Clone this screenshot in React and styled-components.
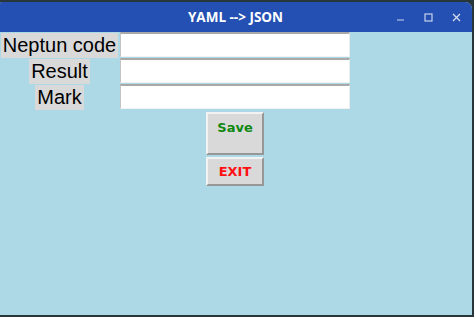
import React from "react";
import styled, { createGlobalStyle } from "styled-components";

const Global = createGlobalStyle`
  html, body { margin: 0; padding: 0; }
  body {
    background: #26363b;
    width: 474px;
    height: 317px;
    overflow: hidden;
  }
`;

const Window = styled.div`
  margin-top: 2px;
  width: 472px;
  height: 313px;
  display: flex;
  flex-direction: column;
  background: #add8e6;
  border-top-right-radius: 7px;
  border-top-left-radius: 2px;
  overflow: hidden;
`;

const TitleBar = styled.div`
  height: 30px;
  flex: 0 0 30px;
  background: #2350b2;
  display: grid;
  grid-template-columns: 1fr auto 1fr;
  align-items: center;
`;

const Title = styled.div`
  grid-column: 2;
  color: #ffffff;
  font-family: "Open Sans", "DejaVu Sans", sans-serif;
  font-weight: 700;
  font-size: 13.5px;
  padding-right: 1px;
`;

const Controls = styled.div`
  grid-column: 3;
  justify-self: end;
  display: flex;
  align-items: center;
  gap: 12px;
  padding-right: 8px;
`;

const Ctl = styled.span`
  width: 16px;
  height: 16px;
  display: flex;
  align-items: center;
  justify-content: center;
`;

const Content = styled.div`
  flex: 1;
  display: grid;
  grid-template-columns: 119px 230px;
  grid-template-rows: 26px 26px 26px auto auto;
  column-gap: 1px;
  align-content: start;
`;

const Label = styled.div`
  justify-self: center;
  align-self: center;
  background: #d9d9d9;
  color: #000;
  font-family: "Liberation Sans", Arial, sans-serif;
  font-size: 20px;
  line-height: 23px;
  padding: 1px 2px 1px 2px;
`;

const Entry = styled.input`
  box-sizing: border-box;
  width: 230px;
  height: 25px;
  margin: 0;
  padding: 0 3px;
  background: #ffffff;
  border-style: solid;
  border-width: 2px 1px 1px 1px;
  border-color: #a9a9a9 #ececec #f2f2f2 #c4c4c4;
  outline: none;
  font-family: "Liberation Sans", Arial, sans-serif;
  font-size: 13px;
  align-self: start;
`;

const Button = styled.button`
  grid-column: 2;
  justify-self: center;
  box-sizing: border-box;
  width: 58px;
  height: ${(p) => p.$h}px;
  margin-top: ${(p) => p.$mt}px;
  padding: 0 0 ${(p) => p.$pb || 0}px 0;
  background: #d9d9d9;
  border-style: solid;
  border-width: 2px;
  border-color: #f2f2f2 #979797 #979797 #f2f2f2;
  color: ${(p) => p.$color};
  font-family: "DejaVu Sans", Verdana, sans-serif;
  font-weight: 700;
  font-size: 13px;
  cursor: pointer;
`;

export default function App() {
  return (
    <>
      <Global />
      <Window>
        <TitleBar>
          <Title>YAML --&gt; JSON</Title>
          <Controls>
            <Ctl>
              <svg width="9" height="9" viewBox="0 0 9 9">
                <line x1="1" y1="7" x2="8" y2="7" stroke="#c9d3ee" strokeWidth="1.2" />
              </svg>
            </Ctl>
            <Ctl>
              <svg width="9" height="9" viewBox="0 0 9 9">
                <rect x="1" y="1" width="7" height="7" fill="none" stroke="#c9d3ee" strokeWidth="1.2" />
              </svg>
            </Ctl>
            <Ctl>
              <svg width="9" height="9" viewBox="0 0 9 9">
                <path d="M1 1 L8 8 M8 1 L1 8" stroke="#d5ddf2" strokeWidth="1.3" />
              </svg>
            </Ctl>
          </Controls>
        </TitleBar>
        <Content>
          <Label>Neptun code</Label>
          <Entry />
          <Label>Result</Label>
          <Entry />
          <Label>Mark</Label>
          <Entry />
          <Button $h={43} $mt={2} $pb={12} $color="#118811">Save</Button>
          <Button $h={29} $mt={2} $color="#ff1010">EXIT</Button>
        </Content>
      </Window>
    </>
  );
}
